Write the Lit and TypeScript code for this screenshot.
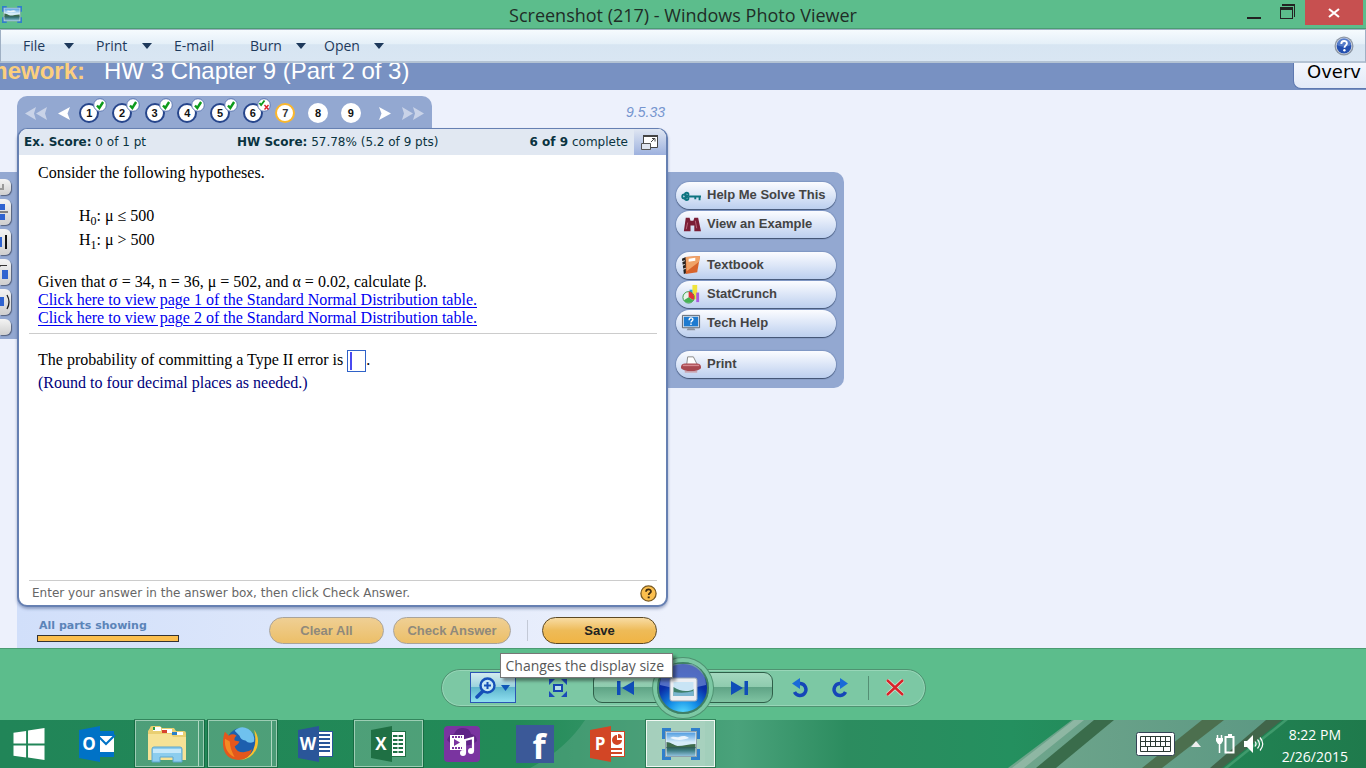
import { LitElement, html, svg, css, nothing } from "lit";
import { customElement } from "lit/decorators.js";
import { classMap } from "lit/directives/class-map.js";

const reset = css`
  *, *::before, *::after { box-sizing: border-box; }
  button { margin: 0; padding: 0; border: 0; background: none; font: inherit; color: inherit; cursor: pointer; }
  svg { display: block; flex: none; }
  h1, h2, p { margin: 0; font: inherit; }
`;

const pictureIcon = (w: number, h: number) => html`
  <svg width=${w} height=${h} viewBox="0 0 38 32" aria-hidden="true">
    <defs>
      <linearGradient id="sky" x1="0" y1="0" x2="0" y2="1">
        <stop offset="0" stop-color="#4f9ce0" /><stop offset="0.6" stop-color="#d6ecfa" /><stop offset="1" stop-color="#d6ecfa" />
      </linearGradient>
      <linearGradient id="lake" x1="0" y1="0" x2="0" y2="1">
        <stop offset="0" stop-color="#2c5a52" /><stop offset="0.4" stop-color="#3f7f86" /><stop offset="1" stop-color="#8fc0dc" />
      </linearGradient>
    </defs>
    <path d="M0 0h9v6H6v5H0zM38 0h-9v6h3v5h6zM0 32h9v-6H6v-5H0zM38 32h-9v-6h3v-5h6z" fill="#2f7fcb" />
    <rect x="3.500" y="3.500" width="31" height="25" fill="#eef3f6" stroke="#8fa3ad" />
    <rect x="4.500" y="4.500" width="29" height="16" fill="url(#sky)" />
    <path d="M8 10c4-3 6 0 9-1s6-2 10 1c-5 2-12 3-19 0z" fill="#fff" opacity=".8" />
    <path d="M4.500 14c4 0 7 3 11 4 6 0 12-2 18-2v4H4.500z" fill="#3e6b4c" />
    <rect x="4.500" y="19" width="29" height="9" fill="url(#lake)" />
  </svg>`;

@customElement("title-bar")
class TitleBar extends LitElement {
  static styles = [reset, css`
    :host { display: grid; grid-template-columns: 1fr auto 1fr; height: 29px; background: #5cbd8c; border-bottom: 1px solid #4b9c72; box-sizing: border-box;
      font-family: "Open Sans", "Noto Sans", sans-serif; color: #1f2d27; }
    .logo { padding: 6px 2px; }
    h1 { font-size: 18px; line-height: 30px; white-space: nowrap; }
    .controls { display: flex; justify-content: flex-end; padding-right: 3px; }
    .control { width: 34px; height: 25px; display: grid; place-items: center; }
    .close { width: 58px; background: #c75050; }
  `];
  render() {
    return html`
      <div class="logo">${pictureIcon(20, 17)}</div>
      <h1>Screenshot (217) - Windows Photo Viewer</h1>
      <div class="controls">
        <button class="control" aria-label="Minimize"><svg width="14" height="16"><path d="M0 12h14v2H0z" fill="#222" /></svg></button>
        <button class="control" aria-label="Restore"><svg width="16" height="17"><path d="M2 0h13v13h-1V2H2zM0 3h13v12H0zM1 6v8h11V6z" fill="#222" fill-rule="evenodd" /></svg></button>
        <button class="control close" aria-label="Close"><svg width="12" height="10"><path d="M1 1l10 8M11 1L1 9" stroke="#fff" stroke-width="2.200" /></svg></button>
      </div>`;
  }
}

@customElement("menu-bar")
class MenuBar extends LitElement {
  static styles = [reset, css`
    :host { display: flex; justify-content: space-between; align-items: center; height: 34px; padding: 0 11px 0 22px;
      border: 1px solid #9fb0c4; border-bottom: 2px solid #b4c3d3; box-sizing: border-box;
      background: linear-gradient(#f6fbfe, #e4eff8 46%, #d7e5f2 47%, #d9e6f3);
      font: 14px/20px "Open Sans", "Noto Sans", sans-serif; color: #1e395b; }
    .items { display: flex; }
    .item { display: flex; align-items: center; justify-content: space-between; min-width: 73px; padding-right: 22px; text-align: left; }
    .wide { min-width: 78px; }
    .mail { min-width: 76px; }
    .burn { min-width: 74px; padding-right: 18px; }
    .open { min-width: 60px; padding-right: 0; }
  `];
  render() {
    const items = [["File", "", true], ["Print", "wide", true], ["E-mail", "mail", false], ["Burn", "burn", true], ["Open", "open", true]] as const;
    return html`
      <nav class="items">${items.map(([label, cls, menu]) => html`
        <button class=${"item " + cls}>${label}${menu ? html`<svg width="10" height="6"><path d="M0 0h10L5 6z" fill="#1e395b" /></svg>` : nothing}</button>`)}
      </nav>
      <button aria-label="Help">
        <svg width="20" height="20" viewBox="0 0 20 20">
          <circle cx="10" cy="10" r="9.500" fill="#8d97a5" /><circle cx="10" cy="10" r="8.200" fill="#d5dae3" /><circle cx="10" cy="10" r="7.400" fill="#2450b0" />
          <path d="M3 9a7 7 0 0 1 14 0c-4 2-10 2-14 0z" fill="#7ea0e0" opacity=".55" />
          <path d="M7.300 8c0-4 5.600-3.800 5.600-.6 0 2-2.400 2-2.400 4.300" fill="none" stroke="#fff" stroke-width="1.900" /><circle cx="10.400" cy="14.200" r="1.200" fill="#fff" />
        </svg>
      </button>`;
  }
}

@customElement("math-palette")
class MathPalette extends LitElement {
  static styles = [reset, css`
    :host { display: flex; flex-direction: column; gap: 4px; padding: 7px 6px 4px 0; background: #93a8d1; }
    .key { height: 26px; display: flex; align-items: center; border-radius: 0 6px 6px 0; background: linear-gradient(#f4f4f4, #cfcfcf); box-shadow: 1px 1px 1px #55617c; }
    .short { height: 16px; }
  `];
  render() {
    return html`
      <button class="key short" aria-label="Collapse palette"><svg width="11" height="10"><path d="M0 7h3V2" fill="none" stroke="#999" stroke-width="2" /></svg></button>
      <button class="key" aria-label="Fraction"><svg width="11" height="20"><path d="M0 2h5v6H0zM0 12h5v6H0z" fill="#2f63d0" /><path d="M0 10h8" stroke="#222" /></svg></button>
      <button class="key" aria-label="Absolute value"><svg width="11" height="20"><path d="M0 5h2v10H0z" fill="#2f63d0" /><path d="M6 3v14" stroke="#111" stroke-width="2" /></svg></button>
      <button class="key" aria-label="Root"><svg width="11" height="20"><path d="M2 8h6v9H2z" fill="#2f63d0" /><path d="M0 5V3.500h7" fill="none" stroke="#333" /></svg></button>
      <button class="key" aria-label="Parentheses"><svg width="11" height="20"><path d="M0 5h4v9H0z" fill="#2f63d0" /><path d="M7 3q4 7 0 14" fill="none" stroke="#222" stroke-width="1.300" /></svg></button>
      <button class="key short" aria-label="More"></button>`;
  }
}

@customElement("question-nav")
class QuestionNav extends LitElement {
  static styles = [reset, css`
    :host { display: flex; justify-content: space-between; height: 32px; }
    .tab { display: flex; width: 415px; height: 42px; padding-bottom: 8px; border-radius: 10px 10px 0 0; background: #93a8d1; }
    .ends { display: flex; align-items: center; gap: 11px; padding-left: 8px; width: 56px; }
    .ends.next { padding-left: 12px; width: 65px; }
    .steps { display: flex; flex: 1; margin: 0; padding: 0; list-style: none; font: bold 11px/14px "Liberation Sans", Arial, sans-serif; }
    .step { flex: 1; display: grid; place-items: center; }
    .dot { position: relative; width: 20px; height: 20px; border-radius: 50%; border: 2px solid #fff; background: #fff; color: #111; }
    .done { border-color: #27468c; }
    .current { border-color: #fbb72c; color: #333; }
    .badge { position: absolute; right: -10px; top: -7px; }
    .ref { align-self: center; padding-right: 3px; font: italic 14px/16px "Liberation Sans", Arial, sans-serif; color: #7595cf; }
  `];
  badge(n: number) {
    if (n > 6) return nothing;
    return html`<svg class="badge" width="14" height="14" viewBox="0 0 14 14">
      <circle cx="7" cy="7" r="6.300" fill="#fff" stroke="#5d78b3" />
      ${n < 6 ? svg`<path d="M4 7.500l2.300 2.500 3.800-6" fill="none" stroke="#0d9a1c" stroke-width="2.400" />`
        : svg`<path d="M2.500 5l1.600 2 3.400-4.500" fill="none" stroke="#0d9a1c" stroke-width="1.800" /><path d="M7.500 7l4 4.500M11.500 7l-4 4.500" stroke="#e0202a" stroke-width="1.400" />`}
    </svg>`;
  }
  render() {
    const faint = "#c9d3e8";
    return html`
      <nav class="tab">
        <div class="ends">
          <button aria-label="First"><svg width="22" height="13"><path d="M11 0L9 6.500 11 13 0 6.500zM22 0l-2 6.500 2 6.500-11-6.500z" fill=${faint} /></svg></button>
          <button aria-label="Previous"><svg width="12" height="13"><path d="M12 0L9.500 6.500 12 13 0 6.500z" fill="#fff" /></svg></button>
        </div>
        <ol class="steps">${[1, 2, 3, 4, 5, 6, 7, 8, 9].map((n) => html`
          <li class="step"><button class=${classMap({ dot: true, done: n < 7, current: n === 7 })}>${n}${this.badge(n)}</button></li>`)}
        </ol>
        <div class="ends next">
          <button aria-label="Next"><svg width="12" height="13"><path d="M0 0l2.500 6.500L0 13l12-6.500z" fill="#fff" /></svg></button>
          <button aria-label="Last"><svg width="22" height="13"><path d="M0 0l2 6.500L0 13l11-6.500zM11 0l2 6.500-2 6.500 11-6.500z" fill=${faint} /></svg></button>
        </div>
      </nav>
      <span class="ref">9.5.33</span>`;
  }
}

@customElement("exercise-panel")
class ExercisePanel extends LitElement {
  static styles = [reset, css`
    :host { position: relative; display: flex; flex-direction: column; flex: 1; border: 1px solid #6680b2; border-width: 1px 2px 2px; border-radius: 10px; background: #fff;
      overflow: hidden; box-shadow: 0 2px 3px rgba(60, 80, 130, .45); }
    .scores { display: grid; grid-template-columns: 213px 1fr auto 32px; align-items: center; height: 26px; padding-left: 5px; background: #e1e8f2;
      font: 11px/14px "DejaVu Sans", Verdana, sans-serif; font-size: 12px; color: #0a3340; }
    .done { padding-right: 6px; }
    .expand { align-self: stretch; display: grid; place-items: center; background: linear-gradient(#dfe6f2, #9db1de); }
    .body { padding: 9px 9px 0 10px; font: 16px/18px "Liberation Serif", "Times New Roman", serif; color: #000; }
    .body p { padding-left: 9px; }
    .body .hyps { padding: 22px 0 21px 41px; line-height: 24px; }
    sub { font-size: 12px; line-height: 0; vertical-align: -4px; }
    a { color: #0000f0; text-decoration: underline; text-underline-offset: 2px; }
    hr { margin: 0; border: 0; border-top: 1px solid #ccc; }
    .body hr { margin: 6px 0 15px; }
    .answer { line-height: 22px; }
    .box { width: 19px; height: 22px; margin: 0; padding: 0 4px; border: 1px solid #2f62c8; outline: 0; border-radius: 0; vertical-align: middle; font: inherit; caret-color: transparent;
      background: linear-gradient(#4a4af0, #4a4af0) 2px 1px / 2px 18px no-repeat #fff; }
    .note { color: #00007c; line-height: 22px; }
    .foot { margin: auto 9px 0 10px; }
    .hint { display: flex; justify-content: space-between; align-items: center; height: 24px; padding-left: 3px; font: 12px/16px "DejaVu Sans", Verdana, sans-serif; color: #666; }
  `];
  render() {
    return html`
      <div class="scores">
        <span><b>Ex. Score:</b> 0 of 1 pt</span>
        <span><b>HW Score:</b> 57.78% (5.2 of 9 pts)</span>
        <span class="done"><b>6 of 9</b> complete</span>
        <button class="expand" aria-label="Expand"><svg width="18" height="17" fill="none" stroke="#444"><path d="M2.500 9V1.500h14v12H10" fill="#fff" /><path d="M2 2h15" stroke-width="2" /><path d="M10 8l4-4M11 4.500h3v3" /><path d="M.5 9.500h9v6h-9z" fill="#dfe5f0" stroke="#555" /></svg></button>
      </div>
      <div class="body">
        <p>Consider the following hypotheses.</p>
        <div class="hyps">
          <p class="hyp">H<sub>0</sub>: μ ≤ 500</p>
          <p class="hyp">H<sub>1</sub>: μ &gt; 500</p>
        </div>
        <p>Given that σ = 34, n = 36, μ = 502, and α = 0.02, calculate β.</p>
        <p><a href="#table-1">Click here to view page 1 of the Standard Normal Distribution table.</a></p>
        <p><a href="#table-2">Click here to view page 2 of the Standard Normal Distribution table.</a></p>
        <hr />
        <p class="answer"><label for="beta">The probability of committing a Type II error is</label> <input class="box" id="beta" type="text" />.</p>
        <p class="note">(Round to four decimal places as needed.)</p>
      </div>
      <div class="foot">
        <hr />
        <div class="hint"><span>Enter your answer in the answer box, then click Check Answer.</span>
          <button aria-label="Help"><svg width="17" height="17" viewBox="0 0 17 17"><circle cx="8.500" cy="8.500" r="7.600" fill="#fbbf4e" stroke="#7a5a20" stroke-width="1.300" /><path d="M6 6.800c0-3.200 5-3.200 5-.3 0 1.600-2.300 1.500-2.300 3.500" fill="none" stroke="#3d2a10" stroke-width="1.700" /><path d="M7.700 11.500h2v1.800h-2z" fill="#3d2a10" /></svg></button>
        </div>
      </div>`;
  }
}

@customElement("action-row")
class ActionRow extends LitElement {
  static styles = [reset, css`
    :host { display: flex; align-items: center; box-sizing: border-box; height: 53px; margin-top: -12px; padding: 18px 11px 0 20px; background: linear-gradient(90deg, #d1dffa, #edf1fc); }
    .parts { width: 142px; margin: 0 auto 0 0; font: bold 11px/14px "DejaVu Sans", Verdana, sans-serif; color: #5b84b8; }
    .parts span { display: block; padding: 0 2px; white-space: nowrap; }
    .bar { height: 7px; margin-top: 2px; border: 1px solid #333; background: #fbbf4e; }
    .act { width: 115px; height: 27px; margin-right: 9px; border: 1px solid #a9a39a; border-radius: 14px; background: linear-gradient(#efcf94, #ecbf68);
      font: bold 13px/16px "Liberation Sans", Arial, sans-serif; color: #8f897b; }
    .check { width: 118px; margin-right: 16px; }
    .rule { width: 1px; height: 21px; background: #c3c9d6; margin-right: 14px; }
    .save { margin-right: 0; border-color: #5c4823; background: linear-gradient(#f8dca4, #eebb58 50%, #f0b444); color: #222; }
  `];
  render() {
    return html`
      <div class="parts"><span>All parts showing</span><div class="bar"></div></div>
      <button class="act" disabled>Clear All</button>
      <button class="act check" disabled>Check Answer</button>
      <span class="rule"></span>
      <button class="act save">Save</button>`;
  }
}

@customElement("tool-list")
class ToolList extends LitElement {
  static styles = [reset, css`
    :host { display: flex; flex-direction: column; gap: 14px; padding: 10px 8px; background: #93a8d1; border-radius: 0 10px 10px 0; }
    .group { display: flex; flex-direction: column; gap: 2px; }
    .tool { display: flex; align-items: center; gap: 6px; height: 27px; padding: 0 5px 2px; border-radius: 14px; background: linear-gradient(#fbfcff, #dfe8f8 45%, #bccfee);
      box-shadow: 0 1px 1px #3f506f, 0 0 1px 1px #7f96c2; font: bold 13px/16px "Liberation Sans", Arial, sans-serif; color: #444; }
  `];
  icons: Record<string, unknown> = {
    key: svg`<g fill="none" stroke="#0d7480" stroke-width="2"><circle cx="3.500" cy="12" r="2.200"/><circle cx="6" cy="14" r="1.800"/><circle cx="6" cy="10" r="1.800"/><path d="M8 12h13M15 12v3M19.500 12v4"/></g>`,
    binoculars: svg`<path d="M5 4h4l1 3h3l1-3h4l3 14h-7v-6h-4v6H3z" fill="#7b1d35"/><path d="M7 9l-1.500 7M15 7l1.500 8" stroke="#b86478" fill="none"/>`,
    book: svg`<path d="M1 4l4-2 1 17-3 1z" fill="#222"/><path d="M5 2l15-1-3 17-12 2z" fill="#d8642c"/><path d="M5 2l15-1-1 6-13 10z" fill="#f0a368"/><path d="M8 4l7-1v3l-7 1z" fill="#fff"/><path d="M1 7l3-1M1 11l3-1M2 15l3-1" stroke="#eee"/>`,
    chart: svg`<path d="M12 1h5v15h-5z" fill="#f0e43c"/><path d="M9 6h3v10H9z" fill="#2a9fd8"/><path d="M16 9h3v10h-3z" fill="#a95be0"/><circle cx="8" cy="14" r="6" fill="#e9f3e9" stroke="#389a46"/><path d="M8 14V8a6 6 0 0 1 5 9z" fill="#e0303a"/><path d="M8 14l5 3a6 6 0 0 1-10 0z" fill="#46b356"/>`,
    monitor: svg`<path d="M1.500 2.500h18v13h-18z" fill="#d9dee6" stroke="#5b6470"/><path d="M3 4h15v10H3z" fill="#1d7bd0"/><path d="M8.500 7.500c0-3 4-3 4-.6 0 1.400-2 1.300-2 3M10.500 11v1.500" fill="none" stroke="#fff" stroke-width="1.400"/><path d="M7 16h7l1 2H6z" fill="#8a93a0"/>`,
    printer: svg`<path d="M6 11l1-8h6l4 8z" fill="#fff" stroke="#888"/><path d="M0 13q1-3 4-3h13q3 0 4 3v2q-3 3-10.500 3T0 15z" fill="#a84850"/><path d="M2 12h17" stroke="#d58a90" stroke-width="1.500"/><path d="M4 18h13v1.500H4z" fill="#c99ba4"/>`,
  };
  render() {
    const groups = [
      [["key", "Help Me Solve This"], ["binoculars", "View an Example"]],
      [["book", "Textbook"], ["chart", "StatCrunch"], ["monitor", "Tech Help"]],
      [["printer", "Print"]],
    ];
    return groups.map((g) => html`<div class="group">${g.map(([icon, label]) => html`
      <button class="tool"><svg width="20" height="20" viewBox="0 0 21 21">${this.icons[icon]}</svg>${label}</button>`)}</div>`);
  }
}

@customElement("viewer-controls")
class ViewerControls extends LitElement {
  static styles = [reset, css`
    :host { display: flex; justify-content: center; align-items: center; height: 72px; padding-top: 6px; background: #5cbd8c; border-top: 1px solid #4b9c72; box-sizing: border-box; }
    .pill { display: flex; align-items: center; width: 485px; height: 38px; padding: 0 21px 0 28px; border: 1px solid #4f9271; border-radius: 20px; background: #7cc8a4; box-shadow: inset 0 0 0 1px #98d6b8; }
    .zoom { position: relative; display: flex; align-items: center; justify-content: center; gap: 4px; width: 46px; height: 31px; border: 1px solid #2b55b5;
      background: linear-gradient(#d3ebf0, #9bd3dc 48%, #5fb5cc 50%, #8fe0f0); }
    .tip { position: absolute; left: 29px; top: -20px; z-index: 3; height: 25px; padding: 0 8px 0 5px; border: 1px solid #777; background: #fff; box-shadow: 3px 3px 3px rgba(0, 0, 0, .4);
      font: 14px/23px "Open Sans", "Noto Sans", sans-serif; color: #575757; white-space: nowrap; }
    .fit { margin: 0 26px 0 33px; }
    .step { display: grid; place-items: center; width: 66px; height: 31px; border: 1px solid #2f5f49; background: linear-gradient(#a4d8bf, #8ecbae 48%, #5fa486 50%, #7fc3a2); }
    .prev { border-radius: 9px 0 0 9px; margin-right: -3px; }
    .next { border-radius: 0 9px 9px 0; margin: 0 19px 0 -3px; }
    .orb { position: relative; z-index: 1; display: grid; place-items: center; flex: none; width: 52px; height: 52px; margin: 0 1px; border-radius: 50%; border: 2px solid #3f7f66;
      background: radial-gradient(circle at 50% 105%, #5fe0ff, #1590e8 28%, #0a2fa8 58%, #071b8c); box-shadow: 0 0 0 4px #7cc8a4, 0 0 0 5px #4f9271; }
    .redo { margin: 0 20px 0 22px; }
    .rule { width: 1px; height: 24px; margin-right: 17px; background: #548f74; }
  `];
  render() {
    return html`
      <div class="pill">
        <button class="zoom" aria-label="Change the display size" aria-describedby="tip">
          <svg width="22" height="22" viewBox="0 0 22 22" fill="none" stroke="#1550b8"><path d="M8.500 13.500L2 20" stroke-width="3.500" stroke-linecap="round" /><circle cx="12.500" cy="8.500" r="7" fill="#c5e6f5" stroke-width="2.400" /><path d="M12.500 5v7M9 8.500h7" stroke-width="2" /></svg>
          <svg width="9" height="6"><path d="M0 0h9L4.500 6z" fill="#0f57b8" /></svg>
          <span class="tip" id="tip" role="tooltip">Changes the display size</span>
        </button>
        <button class="fit" aria-label="Actual size"><svg width="18" height="18" fill="#1a4cb8"><path d="M0 0h6L0 6zM18 0v6l-6-6zM0 18v-6l6 6zM18 18h-6l6-6z" /><path d="M5 6h8v6H5z" fill="#b9e0e6" stroke="#1646b0" stroke-width="2" /></svg></button>
        <button class="step prev" aria-label="Previous"><svg width="17" height="14" fill="#0f4db8"><path d="M0 0h3.500v14H0zM17 0v14L5 7z" /></svg></button>
        <button class="orb" aria-label="Play slide show">
          <svg width="48" height="48" viewBox="1 1 48 48">
            <path d="M2 22A23 23 0 0 1 48 22Q25 29 2 22z" fill="#aac0f0" opacity=".45" />
            <rect x="12" y="15" width="27" height="23" rx="2" fill="#eceef2" stroke="#9aa4b5" /><rect x="15.500" y="19" width="20" height="14" fill="#c8e4f5" />
            <path d="M15.500 24q6 4 12 4t8-2v7h-20z" fill="#3d7f6a" /><path d="M15.500 29q10 2 20-1v5h-20z" fill="#79b5cf" />
          </svg>
        </button>
        <button class="step next" aria-label="Next"><svg width="17" height="14" fill="#0f4db8"><path d="M17 0h-3.500v14H17zM0 0v14l12-7z" /></svg></button>
        <button aria-label="Rotate counterclockwise"><svg width="17" height="20" fill="none" stroke="#1546b8" stroke-width="3.400"><path d="M6 5.500h2.500a6 6 0 1 1-6 8.500" /><path d="M8 0v11L0 5.500z" fill="#1a6ad8" stroke="none" /></svg></button>
        <button class="redo" aria-label="Rotate clockwise"><svg width="17" height="20" fill="none" stroke="#1546b8" stroke-width="3.400"><path d="M11 5.500H8.500a6 6 0 1 0 6 8.500" /><path d="M9 0v11L17 5.500z" fill="#1a6ad8" stroke="none" /></svg></button>
        <span class="rule"></span>
        <button aria-label="Delete"><svg width="18" height="17" fill="none"><path d="M1 1l16 15M17 1L1 16" stroke="#d3e9d8" stroke-width="4" /><path d="M1 1l16 15M17 1L1 16" stroke="#d8232a" stroke-width="2.400" /></svg></button>
      </div>`;
  }
}

@customElement("task-bar")
class TaskBar extends LitElement {
  static styles = [reset, css`
    :host { display: grid; height: 48px; background: #228a58; font: 14px/22px "Open Sans", "Noto Sans", sans-serif; color: #fff; }
    .backdrop, .content { grid-area: 1 / 1; min-width: 0; }
    .backdrop { width: 100%; height: 48px; }
    .content { position: relative; display: flex; justify-content: space-between; }
    .apps { display: flex; gap: 4px; }
    .app { display: grid; place-items: center; width: 69px; height: 47px; }
    .app svg { overflow: visible; }
    .start { width: 58px; }
    .open { border: 1px solid rgba(190, 225, 205, .7); background: rgba(255, 255, 255, .2); outline: 1px solid rgba(10, 80, 45, .5); }
    .stack { box-shadow: inset -4px 0 0 #4a9b76, inset -5px 0 0 rgba(200, 230, 212, .8); padding-right: 5px; }
    .active { border: 1px solid #f0f8f3; background: rgba(255, 255, 255, .5); }
    .tray { display: flex; align-items: center; padding-right: 18px; }
    .key { margin-right: 16px; }
    .up { margin-right: 15px; }
    .power { margin-right: 9px; }
    .sound { margin-right: 18px; }
    .clock { padding-top: 4px; text-align: center; }
    .line { display: block; }
    .letter { font-family: "Open Sans", "Noto Sans", sans-serif; font-weight: 700; fill: #fff; }
  `];
  office(letter: string, color: string, page: unknown) {
    return html`<svg width="36" height="36" viewBox="0 0 36 36">
      <path d="M19 5h16v26H19z" fill=${color} />${page}<path d="M0 4l21-4v36L0 32z" fill=${color} />
      <text class="letter" x="10" y="24" font-size="17" text-anchor="middle">${letter}</text></svg>`;
  }
  apps() {
    return [
      ["Start", "start", svg`<path d="M0 5l13-2v13H0zM15 2.700L32 0v16H15zM0 18h13v12.500L0 28.500zM15 18h17v15l-17-2.500z" fill="#fff"/>`, "0 0 32 33", 32],
      ["Outlook", "", this.office("O", "#0072c6", svg`<path d="M20 10h15v16H20z" fill="#fff"/><path d="M20 11l7 7 9-9" fill="none" stroke="#0072c6" stroke-width="2"/>`)],
      ["File Explorer", "open stack", svg`<path d="M3 3q0-2 2-2h8l2 2h12l2 3h8q2 0 2 2v26H1V6z" fill="#e9cf72"/><path d="M6 2h8v4H6zM15 4h10v4H15zM25 7h11v3H25z" fill="#fff"/><path d="M6 2h2v3H6z" fill="#2a9a48"/><path d="M15 5h5v3h-5z" fill="#d8432e"/><path d="M25 7h5v3h-5z" fill="#2a7fc8"/><path d="M1 9h23l2 3h13v23H1z" fill="#f6e296"/><path d="M5 37V24q0-2 2-2h26q2 0 2 2v13h-9v-5H13v5z" fill="#8ccdee" stroke="#5ba6cf"/><path d="M6 28h28v-4H6z" fill="#c4e8fa"/>`, "0 0 40 38", 40],
      ["Firefox", "open stack", svg`<circle cx="20" cy="18" r="15" fill="#1d5fae"/><path d="M13 6q6-6 14-2 7 4 6 13-5 3-9-1-5-1-6-5z" fill="#6fc1ee"/><path d="M33 5q6 8 3 18-5 13-18 13 10-2 14-10 4-9 1-21z" fill="#fbc02d"/><path d="M3 7l4 4q4-3 8 0-3 2-2 5l5 1q-1 3-5 5 2 6 9 6 5 0 9-3-3 11-14 11Q2 35 1 20 1 12 3 7z" fill="#e4571c"/><path d="M3 14q-1 14 10 19-5-9-5-16z" fill="#f58a24"/>`, "0 0 38 38", 37],
      ["Word", "", this.office("W", "#2a5699", svg`<path d="M20 6h14v24H20z" fill="#fff"/><path d="M21 9h11M21 13h11M21 17h11M21 21h11M21 25h11" stroke="#2a5699" stroke-width="2"/>`)],
      ["Excel", "open", this.office("X", "#1f7044", svg`<path d="M20 6h14v24H20z" fill="#fff"/><path d="M22 10h10M22 14h10M22 18h10M22 22h10M22 26h10" stroke="#1f7044" stroke-width="2"/><path d="M27 8v20" stroke="#fff"/>`)],
      ["Video", "", svg`<rect width="36" height="36" rx="4" fill="#7a34a0"/><path d="M3 14q2-6 7-6 3-7 9-6 7 0 8 6 6 1 6 7-7 6-15 4-9 2-15-5z" fill="#5f2486"/><path d="M6 9h14v15H6z" fill="#fff"/><path d="M8 11h10M8 22h10" stroke="#7a34a0" stroke-width="2" stroke-dasharray="2 1"/><path d="M10 13l6 3.500-6 3.500z" fill="#7a34a0"/><path d="M21 27V14l8-2v13" fill="none" stroke="#fff" stroke-width="2.200"/><circle cx="19" cy="27" r="3" fill="#fff"/><circle cx="27" cy="25" r="3" fill="#fff"/>`, "0 0 36 36", 36],
      ["Facebook", "", svg`<path d="M0 0h38v38H0z" fill="#3b5998"/><text class="letter" x="23" y="34" font-size="34" text-anchor="middle">f</text>`, "0 0 38 38", 38],
      ["PowerPoint", "", this.office("P", "#d24625", svg`<path d="M20 6h14v24H20z" fill="#fff"/><path d="M27 9a5 5 0 1 0 5 5h-5z" fill="#d24625"/><path d="M28 8q4 0 4 4h-4zM21 22h11v2H21zM21 26h11v2H21z" fill="#d24625"/>`)],
      ["Photo Viewer", "open active", pictureIcon(38, 32)],
    ] as any[];
  }
  render() {
    return html`
      <svg class="backdrop" viewBox="0 0 1366 48" preserveAspectRatio="none" aria-hidden="true">
        <defs>
          <linearGradient id="leaf"><stop offset="0" stop-color="#218558" /><stop offset="0.380" stop-color="#228a57" /><stop offset="0.540" stop-color="#4aa27b" /><stop offset="0.620" stop-color="#2c8c5f" /><stop offset="0.740" stop-color="#24905f" /><stop offset="1" stop-color="#1f7a4c" /></linearGradient>
          <linearGradient id="vein"><stop offset="0" stop-color="#6fa68c" /><stop offset="1" stop-color="#5c9883" /></linearGradient>
        </defs>
        <path d="M0 0h1366v48H0z" fill="url(#leaf)" />
        <path d="M530 48Q565 30 585 0h120v48z" fill="#5aa583" opacity=".5" />
        <path d="M1008 48L1072 0h207l-62 48z" fill="url(#vein)" />
        <path d="M1012 48L1074 0h10l-60 48z" fill="#9dbfae" opacity=".7" />
        <path d="M1036 48L1094 0h20l-58 48z" fill="#3a6c4b" />
        <path d="M1142 48L1202 0h22l-62 48z" fill="#4c6f4e" />
        <path d="M1210 48L1266 0h16l-60 48z" fill="#41654a" />
        <path d="M1224 48L1284 0h4l-60 48z" fill="#3f9a6c" />
      </svg>
      <div class="content">
        <nav class="apps">${this.apps().map(([name, cls, icon, box, size]) => html`
          <button class=${"app " + cls} aria-label=${name}>${box ? html`<svg width=${size} height=${size} viewBox=${box}>${icon}</svg>` : icon}</button>`)}
        </nav>
        <div class="tray">
          <button class="key" aria-label="Touch keyboard"><svg width="39" height="24"><rect x=".5" y=".5" width="38" height="23" rx="2" fill="#fff" stroke="#345" /><path d="M4.500 4.500h30v15h-30zM4.500 9.500h30M4.500 14.500h30M9.500 4.500v10M14.500 4.500v10M19.500 4.500v10M24.500 4.500v10M29.500 4.500v10M11.500 14.500v5M27.500 14.500v5" fill="none" stroke="#2c3a34" /></svg></button>
          <button class="up" aria-label="Show hidden icons"><svg width="10" height="6"><path d="M5 0l5 6H0z" fill="#eee" /></svg></button>
          <button class="power" aria-label="Power"><svg width="19" height="20" fill="none" stroke="#fff"><path d="M1.500 1v4M5.500 1v4M3.500 9v10" stroke-width="1.500" /><path d="M0 4h7v3L5 10H2L0 7z" fill="#fff" stroke="none" /><path d="M10 3h7.500v15.500h-8V3zM12 1h4" stroke-width="2" /></svg></button>
          <button class="sound" aria-label="Volume"><svg width="20" height="20" fill="none" stroke="#fff"><path d="M0 7h3l6-6v18l-6-6H0z" fill="#fff" stroke="none" /><path d="M11 7.500q2 2.500 0 5M13.500 5.500q4 4.500 0 9M16 3.500q5.500 6.500 0 13" stroke-width="1.200" /></svg></button>
          <div class="clock"><span class="line">8:22 PM</span><span class="line">2/26/2015</span></div>
        </div>
      </div>`;
  }
}

@customElement("app-root")
class AppRoot extends LitElement {
  static styles = [reset, css`
    :host { display: flex; flex-direction: column; min-height: 100vh; overflow: hidden; }
    .photo { display: flex; flex-direction: column; flex: 1; background: #edf1fc; overflow: hidden; }
    .band { display: flex; height: 27px; overflow: hidden; background: #7891c2; font: 24px/16px "Liberation Sans", Arial, sans-serif; white-space: nowrap; }
    .kind { display: flex; justify-content: flex-end; width: 104px; padding-right: 19px; overflow: hidden; font-weight: 700; color: #fccf7d; }
    .name { flex: 1; color: #fff; }
    .overview { width: 73px; height: 26px; padding: 0 0 8px 13px; overflow: hidden; border: 1px solid #5d78b0; border-width: 0 0 1px 1px; border-radius: 0 0 0 8px; background: linear-gradient(#f3f6fd, #e2eaf8);
      color: #000; text-align: left; font: 18px/16px "DejaVu Sans", Verdana, sans-serif; }
    .work { display: grid; grid-template-columns: 17px minmax(0, 651px) 176px 1fr; flex: 1; }
    .side { align-self: start; margin-top: 82px; }
    .main { display: flex; flex-direction: column; padding-top: 6px; }
  `];
  render() {
    return html`
      <title-bar></title-bar>
      <menu-bar></menu-bar>
      <main class="photo">
        <header class="band">
          <div class="kind">mework:</div>
          <h2 class="name">HW 3 Chapter 9 (Part 2 of 3)</h2>
          <button class="overview">Overv</button>
        </header>
        <div class="work">
          <math-palette class="side"></math-palette>
          <section class="main">
            <question-nav></question-nav>
            <exercise-panel></exercise-panel>
            <action-row></action-row>
          </section>
          <tool-list class="side"></tool-list>
        </div>
      </main>
      <viewer-controls></viewer-controls>
      <task-bar></task-bar>`;
  }
}
